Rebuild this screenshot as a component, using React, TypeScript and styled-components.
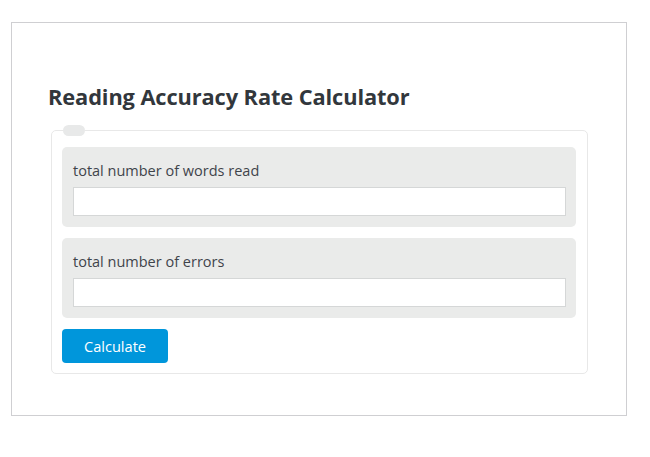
import React from "react";
import styled, { createGlobalStyle } from "styled-components";

const GlobalStyle = createGlobalStyle`
  html, body {
    margin: 0;
    padding: 0;
    background: #ffffff;
  }
  body {
    font-family: "Open Sans", "Noto Sans", "Liberation Sans", sans-serif;
    color: #3c434a;
  }
  * { box-sizing: border-box; }
`;

const Page = styled.div`
  padding: 22px 0 0 11px;
`;

const Card = styled.div`
  width: 616px;
  height: 394px;
  border: 1px solid #cfcfd2;
  background: #fff;
  padding: 60px 38px 0 36px;
`;

const Title = styled.h2`
  margin: 0 0 14px 0;
  font-family: "Open Sans", "Noto Sans", sans-serif;
  font-weight: 700;
  font-size: 21.8px;
  line-height: 28px;
  letter-spacing: -0.1px;
  color: #32373c;
`;

const Fieldset = styled.fieldset`
  margin: 0 0 0 2.5px;
  padding: 11px 11px 10px 10.5px;
  border: 1px solid #e8e8e8;
  border-radius: 5px;
  display: flex;
  flex-direction: column;
  gap: 11px;
  min-width: 0;
`;

const Legend = styled.legend`
  margin-left: 1px;
  padding: 0;
  width: 22px;
  height: 11px;
  background: #e8e9e9;
  border-radius: 6px;
`;

const Group = styled.div`
  background: #eaebea;
  border-radius: 5px;
  padding: 13px 10px 11px 11px;
  display: flex;
  flex-direction: column;
  gap: 5px;
`;

const Label = styled.label`
  font-size: 14.5px;
  line-height: 22px;
  color: #3f444a;
`;

const Input = styled.input`
  height: 29px;
  width: 100%;
  border: 1px solid #d5d7d7;
  background: #fff;
  margin: 0;
  padding: 0 6px;
  font: inherit;
  font-size: 15px;
  outline: none;
`;

const Button = styled.button`
  align-self: flex-start;
  width: 106px;
  height: 34px;
  border: none;
  border-radius: 4px;
  background: #0096db;
  color: #fff;
  font-family: "Open Sans", "Noto Sans", sans-serif;
  font-size: 14.6px;
  padding: 0;
  cursor: pointer;
`;

const fields = ["total number of words read", "total number of errors"];

export default function App() {
  return (
    <>
      <GlobalStyle />
      <Page>
        <Card>
          <Title>Reading Accuracy Rate Calculator</Title>
          <Fieldset>
            <Legend />
            {fields.map((f) => (
              <Group key={f}>
                <Label>{f}</Label>
                <Input type="text" />
              </Group>
            ))}
            <Button type="button">Calculate</Button>
          </Fieldset>
        </Card>
      </Page>
    </>
  );
}
